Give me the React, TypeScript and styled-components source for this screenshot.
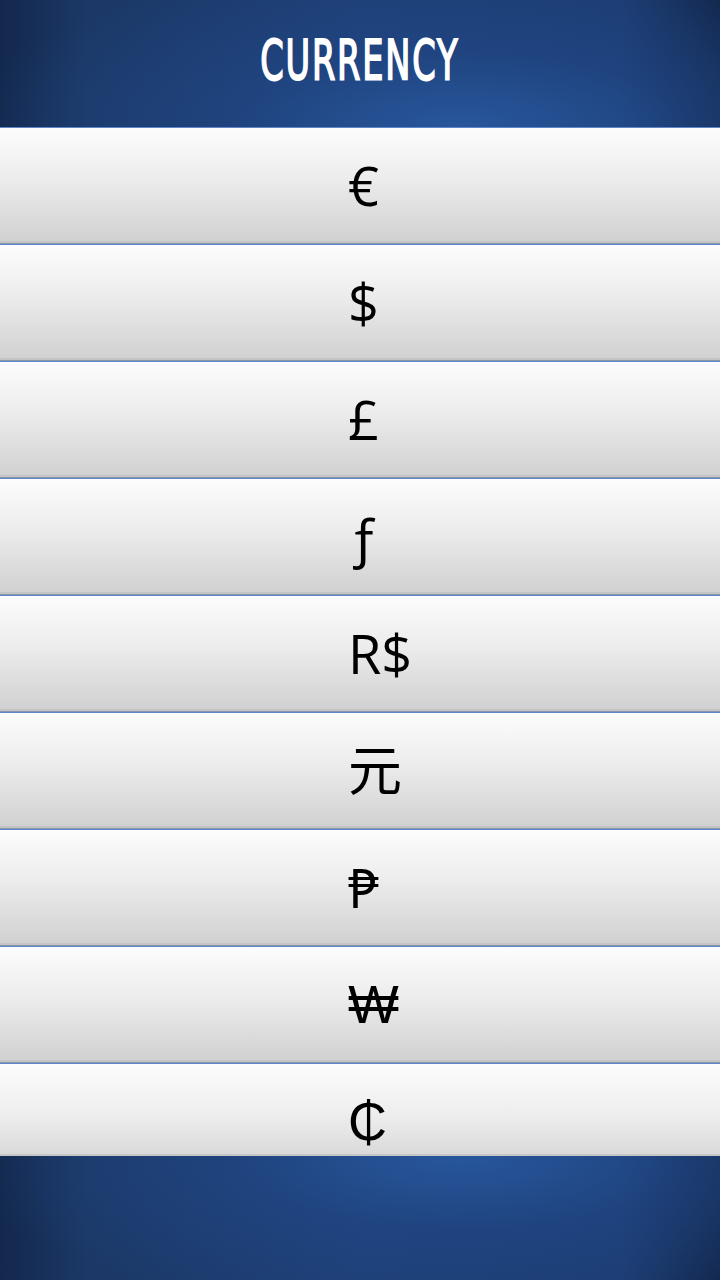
import React from 'react';
import styled, { createGlobalStyle } from 'styled-components';

const GlobalStyle = createGlobalStyle`
    html, body {
        margin: 0;
        padding: 0;
        background: #1b3563;
    }
    * { box-sizing: border-box; }
`;

const Screen = styled.div`
    width: 720px;
    height: 1280px;
    display: flex;
    flex-direction: column;
    overflow: hidden;
`;

const BlueBar = styled.div<{ $height: number; $glowY: string }>`
    flex: 0 0 ${p => p.$height}px;
    background:
        radial-gradient(ellipse 70% 130% at 64% ${p => p.$glowY}, rgba(40, 88, 158, 0.95) 0%, rgba(33, 72, 135, 0.6) 45%, rgba(20, 40, 75, 0) 100%),
        linear-gradient(90deg, #13284c 0%, #1b3866 12%, #1e3f76 50%, #1c3c72 86%, #12264a 100%);
    display: flex;
    align-items: center;
    justify-content: center;
`;

const Title = styled.h1`
    margin: 0;
    color: #fff;
    font-family: "DejaVu Sans", sans-serif;
    font-weight: 400;
    font-size: 56px;
    letter-spacing: 3px;
    -webkit-text-stroke: 2px #fff;
    transform: scaleX(0.6);
    padding-bottom: 8px;
`;

const List = styled.div`
    flex: 1;
    min-height: 0;
    display: flex;
    flex-direction: column;
    overflow: hidden;
    background: #d2d2d2;
`;

const Row = styled.div`
    flex: 0 0 117px;
    min-height: 0;
    display: flex;
    align-items: flex-start;
    padding: 31px 0 0 348px;
    background: linear-gradient(180deg, #fdfdfd 0%, #ececec 45%, #d0d0d0 100%);
    border-bottom: 1px solid #8896ad;
    box-shadow: inset 0 -2px 0 #c4c4c4, inset 0 1px 0 #5f86c6;
    &:last-child {
        flex: 1 1 117px;
        border-bottom: 2px solid #c6c6c6;
        box-shadow: inset 0 1px 0 #5f86c6;
        background: linear-gradient(180deg, #fdfdfd 0%, #eeeeee 55%, #dadada 100%);
    }
`;

const Symbol = styled.span<{ $font?: string }>`
    font-family: ${p => p.$font ?? '"Open Sans"'}, "Noto Sans", "Noto Sans CJK SC", sans-serif;
    font-size: 54px;
    color: #000;
    line-height: 1;
    white-space: nowrap;
`;

const symbols: { s: string; font?: string }[] = [
    { s: '€' },
    { s: '$' },
    { s: '£' },
    { s: 'ƒ' },
    { s: 'R$' },
    { s: '元' },
    { s: '₱' },
    { s: '₩', font: '"Liberation Sans"' },
    { s: '₵', font: '"Liberation Sans"' },
];

const App = () => (
    <>
        <GlobalStyle />
        <Screen>
            <BlueBar $height={127} $glowY="100%">
                <Title>CURRENCY</Title>
            </BlueBar>
            <List>
                {symbols.map(({ s, font }) => (
                    <Row key={s}>
                        <Symbol $font={font}>{s}</Symbol>
                    </Row>
                ))}
            </List>
            <BlueBar $height={124} $glowY="0%" />
        </Screen>
    </>
);

export default App;
